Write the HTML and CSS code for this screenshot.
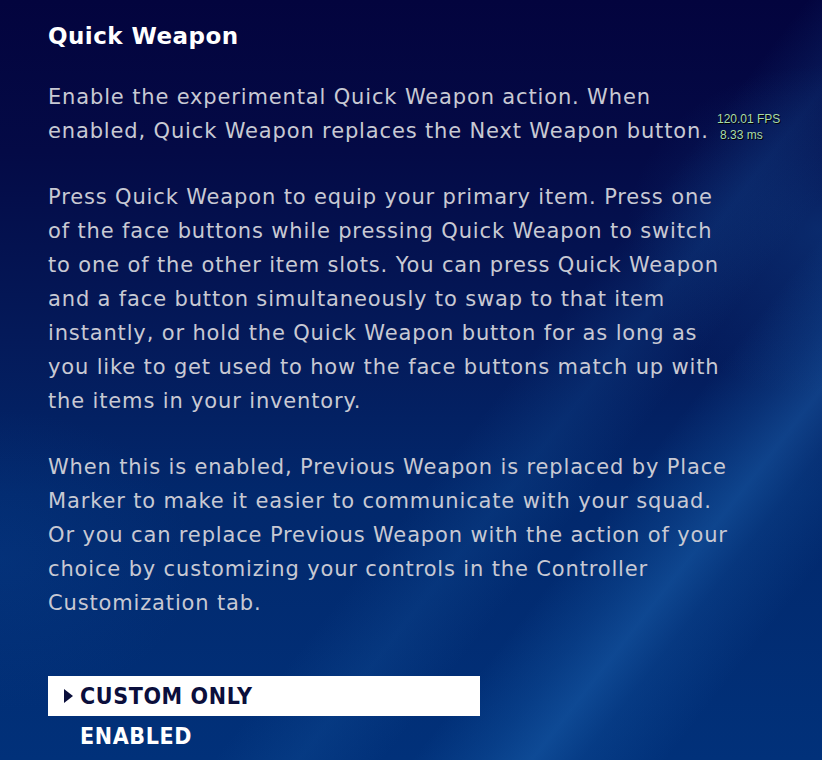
FILE: index.html
```html
<!DOCTYPE html>
<html lang="en">
<head>
<meta charset="utf-8">
<title>Quick Weapon</title>
<link rel="stylesheet" href="styles.css">
</head>
<body>
<div class="screen">
  <div class="panel">
    <h1 class="title">Quick Weapon</h1>
    <p class="desc">Enable the experimental Quick Weapon action. When<br>enabled, Quick Weapon replaces the Next Weapon button.</p>
    <p class="desc">Press Quick Weapon to equip your primary item. Press one<br>of the face buttons while pressing Quick Weapon to switch<br>to one of the other item slots. You can press Quick Weapon<br>and a face button simultaneously to swap to that item<br>instantly, or hold the Quick Weapon button for as long as<br>you like to get used to how the face buttons match up with<br>the items in your inventory.</p>
    <p class="desc">When this is enabled, Previous Weapon is replaced by Place<br>Marker to make it easier to communicate with your squad.<br>Or you can replace Previous Weapon with the action of your<br>choice by customizing your controls in the Controller<br>Customization tab.</p>
    <ul class="options">
      <li class="option selected"><span class="caret"></span>CUSTOM ONLY</li>
      <li class="option">ENABLED</li>
    </ul>
  </div>
  <div class="fps">
    <div class="fps-rate">120.01 FPS</div>
    <div class="fps-ms">8.33 ms</div>
  </div>
</div>
</body>
</html>
```

FILE: styles.css
```css
html, body {
  margin: 0;
  padding: 0;
  width: 822px;
  height: 760px;
  overflow: hidden;
}

.screen {
  position: relative;
  width: 822px;
  height: 760px;
  background:
    linear-gradient(128deg, transparent 71%, rgba(30, 110, 190, 0.22) 76%, rgba(35, 115, 195, 0.38) 79.5%, rgba(30, 110, 190, 0.18) 83%, transparent 89%),
    linear-gradient(128deg, transparent 57%, rgba(25, 95, 170, 0.2) 63%, transparent 69%),
    radial-gradient(ellipse 260px 220px at 822px 230px, rgba(20, 90, 165, 0.35), transparent 75%),
    radial-gradient(ellipse 260px 200px at 0px 560px, rgba(10, 70, 150, 0.25), transparent 75%),
    linear-gradient(to bottom, #03043e 0%, #040a46 20%, #041a5a 45%, #02286c 65%, #01317a 100%);
  font-family: "DejaVu Sans", "Liberation Sans", sans-serif;
}

.panel {
  padding: 19px 0 0 48px;
  display: flex;
  flex-direction: column;
}

.title {
  margin: 0;
  font-size: 23px;
  line-height: 34px;
  font-weight: bold;
  letter-spacing: 0.45px;
  color: #ffffff;
}

.desc {
  margin: 27px 0 0 0;
  font-size: 21px;
  line-height: 34px;
  letter-spacing: 0.85px;
  color: #c8c9d3;
  white-space: nowrap;
}

.desc + .desc {
  margin-top: 32px;
}

.options {
  list-style: none;
  margin: 56px 0 0 0;
  padding: 0;
  width: 432px;
}

.option {
  display: flex;
  align-items: center;
  height: 40px;
  padding-left: 32px;
  font-family: "DejaVu Sans Condensed", "Liberation Sans", Arial, sans-serif;
  font-stretch: condensed;
  font-weight: bold;
  font-size: 23px;
  letter-spacing: 0.6px;
  color: #ffffff;
}

.option.selected {
  position: relative;
  background: #ffffff;
  color: #0b0f3c;
}

.caret {
  position: absolute;
  left: 16px;
  top: 13px;
  width: 0;
  height: 0;
  border-top: 7px solid transparent;
  border-bottom: 7px solid transparent;
  border-left: 9px solid #0b0f3c;
}

.fps {
  position: absolute;
  left: 717px;
  top: 111px;
  font-family: "Liberation Sans", Arial, sans-serif;
  font-size: 12px;
  line-height: 16px;
  color: #a9dba6;
  text-shadow: 1px 1px 0 #000000;
}

.fps-ms {
  padding-left: 3px;
}
```
